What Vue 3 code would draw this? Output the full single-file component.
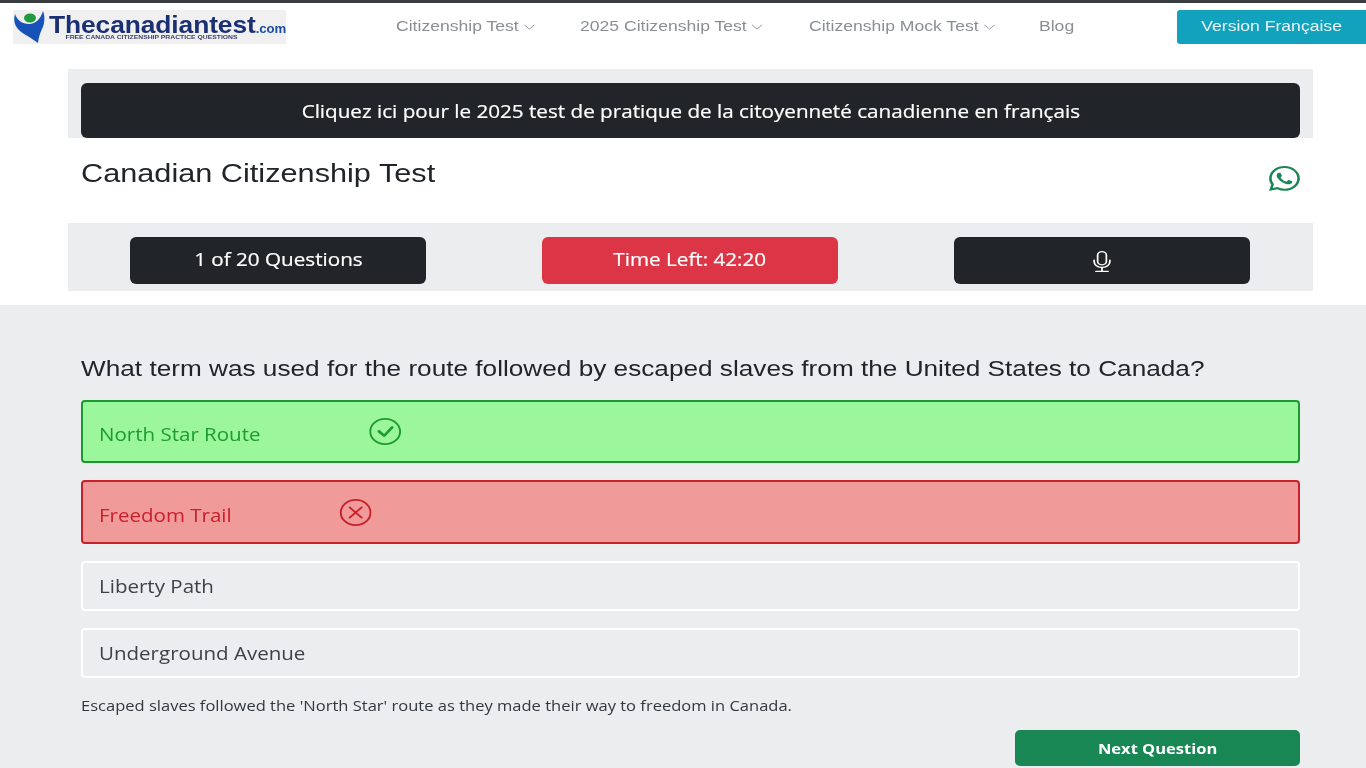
<template>
  <div class="page">
    <header class="navbar">
      <a class="logo">
        <svg class="logo-mark" viewBox="0 0 32 34" width="32" height="34">
          <ellipse cx="16" cy="8" rx="6" ry="4.5" fill="#1f9a3c" />
          <path
            d="M1 4C-1 11 1 17 6 21c5 4 10 6 18 12 .5-5 2-10 4-14 3-6 3-13 1-18-2 7-7 13-14 13S3 10 1 4z"
            fill="#1652b8"
          />
        </svg>
        <span class="logo-text">
          <span class="logo-name">Thecanadiantest<small>.com</small></span>
          <span class="logo-sub">FREE CANADA CITIZENSHIP PRACTICE QUESTIONS</span>
        </span>
      </a>

      <nav class="nav-links">
        <a v-for="link in links" :key="link.label" class="nav-link" :style="{ width: link.width + 'px' }">
          <span class="wide-left">
            {{ link.label }}
            <svg v-if="link.menu" class="chev" viewBox="0 0 12 8" width="10" height="8">
              <path d="M1 1.5l5 5 5-5" fill="none" stroke="currentColor" stroke-width="1" />
            </svg>
          </span>
        </a>
      </nav>

      <button class="btn-version"><span class="wide">Version Française</span></button>
    </header>

    <div class="container">
      <div class="band band-top">
        <button class="btn-dark btn-banner">
          <span class="wide">Cliquez ici pour le 2025 test de pratique de la citoyenneté canadienne en français</span>
        </button>
      </div>

      <div class="title-row">
        <h1><span class="wide-left">Canadian Citizenship Test</span></h1>
        <svg class="whatsapp" viewBox="0 0 16 16" width="31" height="25" preserveAspectRatio="none" fill="#198754">
          <path d="M13.601 2.326A7.854 7.854 0 0 0 7.994 0C3.627 0 .068 3.558.064 7.926c0 1.399.366 2.76 1.057 3.965L0 16l4.204-1.102a7.933 7.933 0 0 0 3.79.965h.004c4.368 0 7.926-3.558 7.93-7.93A7.898 7.898 0 0 0 13.6 2.326zM7.994 14.521a6.573 6.573 0 0 1-3.356-.92l-.24-.144-2.494.654.666-2.433-.156-.251a6.56 6.56 0 0 1-1.007-3.505c0-3.626 2.957-6.584 6.591-6.584a6.56 6.56 0 0 1 4.66 1.931 6.557 6.557 0 0 1 1.928 4.66c-.004 3.639-2.961 6.592-6.592 6.592zm3.615-4.934c-.197-.099-1.17-.578-1.353-.646-.182-.065-.315-.099-.445.099-.133.197-.513.646-.627.775-.114.133-.232.148-.43.05-.197-.1-.836-.308-1.592-.985-.59-.525-.985-1.175-1.103-1.372-.114-.198-.011-.304.088-.403.087-.088.197-.232.296-.346.1-.114.133-.198.198-.33.065-.134.034-.248-.015-.347-.05-.099-.445-1.076-.612-1.47-.16-.389-.323-.335-.445-.34-.114-.007-.247-.007-.38-.007a.729.729 0 0 0-.529.247c-.182.198-.691.677-.691 1.654 0 .977.71 1.916.81 2.049.098.133 1.394 2.132 3.383 2.992.47.205.84.326 1.129.418.475.152.904.129 1.246.08.38-.058 1.171-.48 1.338-.943.164-.464.164-.86.114-.943-.049-.084-.182-.133-.38-.232z" />
        </svg>
      </div>

      <div class="band band-stats">
        <button class="btn-dark btn-stat"><span class="wide stat-text">1 of 20 Questions</span></button>
        <button class="btn-danger btn-stat"><span class="wide stat-text">Time Left: 42:20</span></button>
        <button class="btn-dark btn-stat">
          <svg class="mic" viewBox="0 0 16 16" width="28" height="21" preserveAspectRatio="none" fill="#fff">
            <path d="M3.5 6.5A.5.5 0 0 1 4 7v1a4 4 0 0 0 8 0V7a.5.5 0 0 1 1 0v1a5 5 0 0 1-4.5 4.975V15h3a.5.5 0 0 1 0 1h-7a.5.5 0 0 1 0-1h3v-2.025A5 5 0 0 1 3 8V7a.5.5 0 0 1 .5-.5z" />
            <path d="M10 8a2 2 0 1 1-4 0V3a2 2 0 1 1 4 0v5zM8 0a3 3 0 0 0-3 3v5a3 3 0 0 0 6 0V3a3 3 0 0 0-3-3z" />
          </svg>
        </button>
      </div>
    </div>

    <section class="quiz">
      <h2><span class="wide-left">What term was used for the route followed by escaped slaves from the United States to Canada?</span></h2>

      <div class="answer correct">
        <div class="answer-inner wide-left">
          <span class="answer-label">North Star Route</span>
          <svg viewBox="0 0 16 16" width="27" height="27" fill="currentColor">
            <path d="M8 15A7 7 0 1 1 8 1a7 7 0 0 1 0 14zm0 1A8 8 0 1 0 8 0a8 8 0 0 0 0 16z" />
            <path d="M10.97 4.97a.235.235 0 0 0-.02.022L7.477 9.417 5.384 7.323a.75.75 0 0 0-1.06 1.06L6.97 11.03a.75.75 0 0 0 1.079-.02l3.992-4.99a.75.75 0 0 0-1.071-1.05z" />
          </svg>
        </div>
      </div>

      <div class="answer wrong">
        <div class="answer-inner wide-left">
          <span class="answer-label">Freedom Trail</span>
          <svg viewBox="0 0 16 16" width="27" height="27" fill="currentColor">
            <path d="M8 15A7 7 0 1 1 8 1a7 7 0 0 1 0 14zm0 1A8 8 0 1 0 8 0a8 8 0 0 0 0 16z" />
            <path d="M4.646 4.646a.5.5 0 0 1 .708 0L8 7.293l2.646-2.647a.5.5 0 0 1 .708.708L8.707 8l2.647 2.646a.5.5 0 0 1-.708.708L8 8.707l-2.646 2.647a.5.5 0 0 1-.708-.708L7.293 8 4.646 5.354a.5.5 0 0 1 0-.708z" />
          </svg>
        </div>
      </div>

      <div class="answer plain"><span class="wide-left">Liberty Path</span></div>
      <div class="answer plain"><span class="wide-left">Underground Avenue</span></div>

      <p class="explain"><span class="wide-left">Escaped slaves followed the 'North Star' route as they made their way to freedom in Canada.</span></p>

      <div class="next-row">
        <button class="btn-next"><span class="wide">Next Question</span></button>
      </div>
    </section>
  </div>
</template>

<script setup>
const links = [
  { label: "Citizenship Test", menu: true, width: 184 },
  { label: "2025 Citizenship Test", menu: true, width: 229 },
  { label: "Citizenship Mock Test", menu: true, width: 230 },
  { label: "Blog", menu: false, width: 60 }
];
</script>

<style>
html,
body {
  margin: 0;
  background: #fff;
}
</style>

<style scoped>
.page {
  height: 768px;
  overflow: hidden;
  font-family: "Open Sans", "Liberation Sans", sans-serif;
  color: #212529;
}

/* the whole page reads about 18% wider than it is tall */
.wide,
.wide-left {
  display: inline-block;
  white-space: nowrap;
  transform: scaleX(1.18);
}

.wide-left {
  transform-origin: left center;
}

button {
  border: none;
  font-family: inherit;
  color: #fff;
}

.navbar {
  display: flex;
  align-items: flex-start;
  height: 59px;
  padding: 7px 0 0 13px;
  border-top: 3px solid #3a3d40;
}

.logo {
  display: flex;
  width: 273px;
  height: 34px;
  background: #f0f0f0;
  flex-shrink: 0;
  filter: blur(0.4px);
}

.logo-mark {
  margin-left: 1px;
}

.logo-text {
  display: block;
  margin-left: 3px;
  padding-top: 4px;
  font-family: "Liberation Sans", sans-serif;
  font-weight: 700;
  color: #1b2f74;
  white-space: nowrap;
  transform: scaleX(1.1);
  transform-origin: left center;
}

.logo-name {
  display: block;
  height: 20px;
  font-size: 24px;
  line-height: 22px;
  letter-spacing: -0.1px;
}

.logo-name small {
  font-size: 12px;
  line-height: 1;
  color: #1c4fa0;
}

.logo-sub {
  display: block;
  margin-left: 15px;
  font-size: 6.2px;
  line-height: 6px;
  color: #3a4468;
}

.nav-links {
  display: flex;
  height: 32px;
  align-items: center;
  margin-left: 110px;
}

.nav-link {
  font-family: "Liberation Sans", sans-serif;
  font-size: 14.9px;
  color: #8a8f96;
  white-space: nowrap;
}

.btn-version {
  flex: 1;
  height: 34px;
  margin-left: 78px;
  padding: 0 0 2px;
  background: #12a2bd;
  border-radius: 3px 0 0 3px;
  font-family: "Liberation Sans", sans-serif;
  font-size: 14.9px;
  color: #e9f6f9;
}

.container {
  width: 1245px;
  margin-left: 68px;
  padding-bottom: 14px;
}

.band {
  background: #ecedef;
}

.band-top {
  height: 55px;
  padding: 14px 13px 0;
}

.btn-dark {
  background: #212529;
  border-radius: 6px;
}

.btn-banner {
  display: block;
  width: 100%;
  height: 55px;
  font-size: 17.5px;
  font-weight: 500;
  -webkit-text-stroke: 0.2px #fff;
}

.title-row {
  display: flex;
  justify-content: space-between;
  height: 85px;
  padding: 0 13px;
}

h1 {
  margin: 19px 0 0;
  font-family: "Liberation Sans", sans-serif;
  font-size: 26px;
  line-height: 32px;
  font-weight: 400;
}

.whatsapp {
  margin-top: 28px;
}

.band-stats {
  display: flex;
  justify-content: space-between;
  height: 47px;
  padding: 14px 63px 7px 62px;
}

.btn-stat {
  display: flex;
  align-items: center;
  justify-content: center;
  width: 296px;
  height: 47px;
  font-size: 17.5px;
  font-weight: 500;
  -webkit-text-stroke: 0.2px #fff;
}

.stat-text {
  margin-bottom: 3px;
}

.mic {
  margin-top: 1px;
}

.btn-danger {
  background: #dc3545;
  border-radius: 6px;
}

.quiz {
  height: 463px;
  background: #ecedef;
  padding: 0 66px 0 81px;
  overflow: hidden;
}

h2 {
  margin: 49px 0 16px;
  font-family: "Liberation Sans", sans-serif;
  font-size: 22.2px;
  line-height: 30px;
  font-weight: 400;
  white-space: nowrap;
}

.answer {
  display: flex;
  align-items: center;
  box-sizing: border-box;
  padding: 0 16px;
  border: 2px solid #fff;
  border-radius: 4px;
  font-size: 17.4px;
  color: #3d4247;
}

.answer-inner {
  display: flex;
  align-items: center;
}

.answer-label {
  margin: 5px 92px 0 0;
}

.correct {
  height: 63px;
  margin-bottom: 17px;
  background: #9cf79c;
  border-color: #1a9a2e;
  color: #1c9c30;
}

.wrong {
  height: 64px;
  margin-bottom: 17px;
  background: #f19a9a;
  border-color: #c9202c;
  color: #c9202c;
}

.plain {
  height: 50px;
  margin-bottom: 17px;
}

.explain {
  margin: 18px 0 0;
  font-size: 14px;
  line-height: 20px;
  color: #33383d;
}

.next-row {
  display: flex;
  justify-content: flex-end;
  margin-top: 14px;
}

.btn-next {
  width: 285px;
  height: 36px;
  background: #198754;
  border-radius: 5px;
  font-size: 14px;
  font-weight: 700;
}
</style>
